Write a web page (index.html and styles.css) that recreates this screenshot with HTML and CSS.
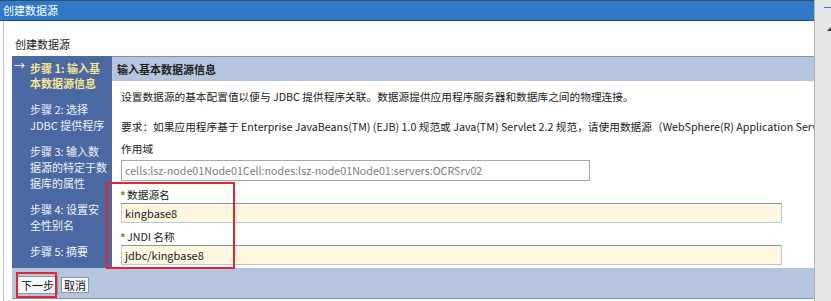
FILE: index.html
```html
<!DOCTYPE html>
<html lang="zh-CN">
<head>
<meta charset="utf-8">
<title>创建数据源</title>
<link rel="stylesheet" href="styles.css">
</head>
<body>
<div class="app">
  <div class="main">
    <div class="titlebar">创建数据源</div>
    <div class="body">
      <div class="panel">
        <div class="heading">创建数据源</div>
        <div class="wizard">
          <div class="wizard-row">
            <div class="nav">
              <div class="step active"><span class="arrow">→</span><span class="step-text">步骤 1: 输入基本数据源信息</span></div>
              <div class="step"><span class="arrow"></span><span class="step-text">步骤 2: 选择 JDBC 提供程序</span></div>
              <div class="step"><span class="arrow"></span><span class="step-text">步骤 3: 输入数据源的特定于数据库的属性</span></div>
              <div class="step"><span class="arrow"></span><span class="step-text">步骤 4: 设置安全性别名</span></div>
              <div class="step"><span class="arrow"></span><span class="step-text">步骤 5: 摘要</span></div>
            </div>
            <div class="content">
              <div class="content-head">输入基本数据源信息</div>
              <div class="content-body">
                <p class="para first">设置数据源的基本配置值以便与 JDBC 提供程序关联。数据源提供应用程序服务器和数据库之间的物理连接。</p>
                <p class="para second">要求：如果应用程序基于 Enterprise JavaBeans(TM) (EJB) 1.0 规范或 Java(TM) Servlet 2.2 规范，请使用数据源（WebSphere(R) Application Server V4）</p>
                <div class="label scope-label">作用域</div>
                <div class="scope-box">cells:lsz-node01Node01Cell:nodes:lsz-node01Node01:servers:OCRSrv02</div>
                <div class="fields">
                  <div class="label req"><span class="star">*</span>数据源名</div>
                  <div class="field">kingbase8</div>
                  <div class="label req second-label"><span class="star">*</span>JNDI 名称</div>
                  <div class="field">jdbc/kingbase8</div>
                </div>
              </div>
            </div>
          </div>
          <div class="footer">
            <button class="btn">下一步</button>
            <button class="btn btn-cancel">取消</button>
          </div>
          <div class="mark mark-fields"></div>
          <div class="mark mark-next"></div>
        </div>
      </div>
    </div>
  </div>
  <div class="scroll">
    <div class="scroll-line"></div>
    <div class="scroll-tri"></div>
  </div>
</div>
</body>
</html>
```

FILE: styles.css
```css
* { box-sizing: border-box; }
html, body { margin: 0; padding: 0; }
body {
  width: 831px;
  height: 301px;
  overflow: hidden;
  background: #ffffff;
  font-family: "Noto Sans CJK SC", "Noto Sans", sans-serif;
  font-size: 10.7px;
  color: #222;
}
.app {
  display: flex;
  width: 831px;
  height: 301px;
}
.main {
  width: 815px;
  height: 301px;
  display: flex;
  flex-direction: column;
  border-right: 1px solid #b2b2b2;
}
.titlebar {
  height: 21px;
  background: #3078c8;
  border-top: 1px solid #3d4b60;
  border-bottom: 1px solid #1f4f8e;
  color: #ffffff;
  line-height: 18px;
  padding-left: 3px;
  font-size: 11px;
}
.body {
  flex: 1;
  padding-left: 3px;
}
.panel {
  height: 100%;
  border-left: 1px solid #c6c6c6;
  padding-top: 15px;
}
.heading {
  line-height: 16px;
  padding-left: 11px;
  color: #222;
  font-size: 11px;
}
.wizard {
  position: relative;
  margin-top: 4px;
  margin-left: 8px;
}
.wizard-row {
  display: flex;
  height: 212px;
}
.nav {
  width: 100px;
  flex: none;
  background: #4a69a3;
  padding-top: 5px;
  font-size: 11px;
}
.step {
  display: flex;
  line-height: 16px;
  color: #eef1f8;
  margin-bottom: 10px;
}
.step.active {
  color: #f6e48e;
  font-weight: bold;
  line-height: 15px;
}
.arrow {
  width: 18px;
  flex: none;
  color: #ffffff;
  font-weight: normal;
  padding-left: 2px;
  line-height: 8px;
  font-size: 11px;
}
.step-text {
  width: 79px;
}
.content {
  flex: 1;
  min-width: 0;
  overflow: hidden;
  white-space: nowrap;
}
.content-head {
  height: 25px;
  background: #b5c5de;
  border-top: 1px solid #7c92b7;
  font-weight: bold;
  font-size: 11px;
  line-height: 24px;
  padding-left: 5px;
}
.content-body {
  padding-left: 9px;
}
.para {
  margin: 0;
  line-height: 16px;
}
.para.first { margin-top: 8px; }
.para.second { margin-top: 14px; }
.label {
  line-height: 16px;
}
.scope-label { margin-top: 6px; }
.scope-box {
  margin-top: 3px;
  width: 469px;
  height: 21px;
  border: 1px solid #a8a8a8;
  color: #7c7c7c;
  line-height: 19px;
  padding-left: 3px;
  overflow: hidden;
}
.fields {
  padding-top: 6px;
}
.star {
  display: inline-block;
  width: 7px;
  color: #8a7b36;
  font-size: 11px;
  font-weight: bold;
  margin-left: -1px;
  vertical-align: -1px;
}
.second-label { margin-top: 6px; }
.field {
  width: 661px;
  height: 20px;
  background: #fff7df;
  border: 1px solid #b9c7dc;
  border-top-color: #7f95b5;
  line-height: 18px;
  padding-left: 3px;
  font-size: 11px;
}
.footer {
  height: 31px;
  background: #b5c5de;
  border-bottom: 1px solid #7c92b7;
  padding: 8px 0 0 5px;
  display: flex;
  align-items: flex-start;
  gap: 3px;
}
.btn {
  font-family: "Noto Sans CJK SC", "Noto Sans", sans-serif;
  font-size: 11px;
  height: 18px;
  padding: 0 3px;
  margin: 0;
  line-height: 16px;
  background: #f4f6f9;
  border: 1px solid #8797b0;
  border-radius: 0;
  color: #111;
}
.btn-cancel {
  margin-top: 1px;
  height: 16px;
  line-height: 14px;
  padding: 0 2px;
}
.mark {
  position: absolute;
  border: 2px solid #e4262c;
}
.mark-fields {
  left: 94px;
  top: 126px;
  width: 129px;
  height: 87px;
}
.mark-next {
  left: 4px;
  top: 216px;
  width: 41px;
  height: 26px;
}
.scroll {
  flex: 1;
  background: #e6e6e6;
  position: relative;
}
.scroll-line {
  position: absolute;
  left: 9px;
  right: 0;
  top: 7px;
  height: 1px;
  background: #3a78c6;
}
.scroll-tri {
  position: absolute;
  left: 12px;
  top: 27px;
  width: 0;
  height: 0;
  border-left: 4px solid transparent;
  border-bottom: 4px solid #333;
}
```
